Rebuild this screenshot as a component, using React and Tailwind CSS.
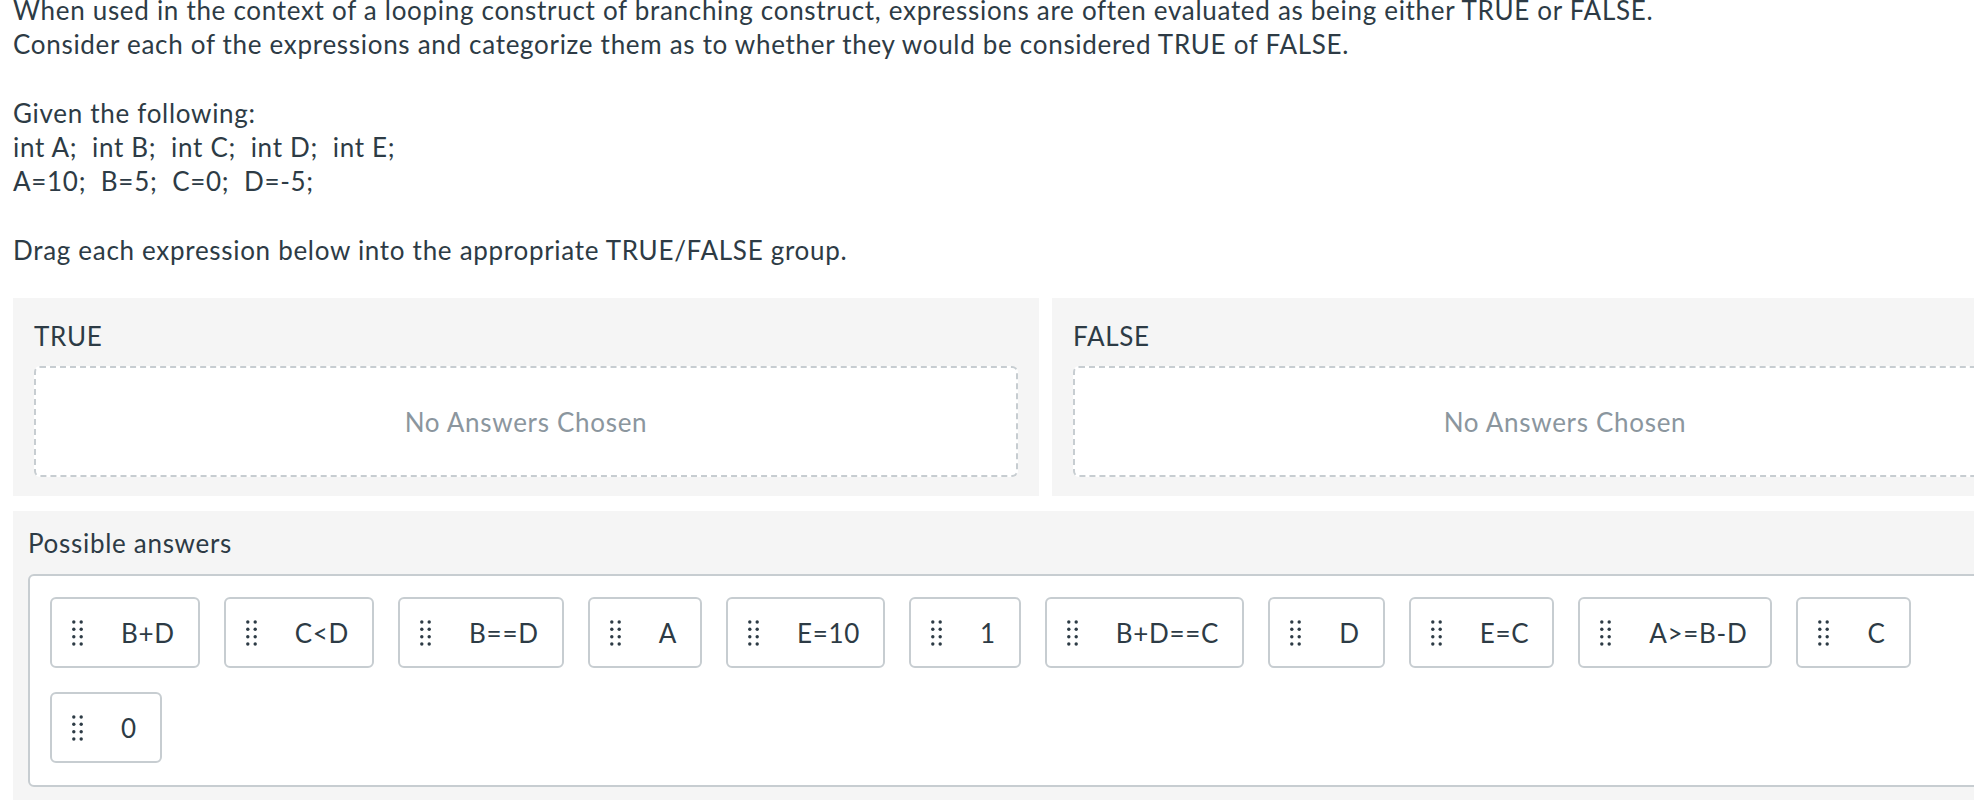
const answers = ["B+D", "C<D", "B==D", "A", "E=10", "1", "B+D==C", "D", "E=C", "A>=B-D", "C", "0"];

function DragHandle() {
  return (
    <svg width="11" height="26" viewBox="0 0 11 26" fill="#2d3b45" className="shrink-0">
      <circle cx="1.8" cy="2" r="1.7" />
      <circle cx="9.2" cy="2" r="1.7" />
      <circle cx="1.8" cy="9.3" r="1.7" />
      <circle cx="9.2" cy="9.3" r="1.7" />
      <circle cx="1.8" cy="16.7" r="1.7" />
      <circle cx="9.2" cy="16.7" r="1.7" />
      <circle cx="1.8" cy="24" r="1.7" />
      <circle cx="9.2" cy="24" r="1.7" />
    </svg>
  );
}

function Chip({ label }) {
  return (
    <div className="h-[71px] flex items-center border-2 border-[#c7cdd1] rounded-md bg-white pl-[20px] pr-[23px]">
      <DragHandle />
      <span className="ml-[38px] leading-[34px]">{label}</span>
    </div>
  );
}

function Group({ title }) {
  return (
    <div className="w-[1026px] shrink-0 bg-[#f5f5f5] pt-[21px] px-[21px] pb-[19px]">
      <div className="leading-[34px]">{title}</div>
      <div className="mt-[13px] h-[111px] flex items-center justify-center rounded-md border-2 border-dashed border-[#c7cdd1] bg-white text-[#8b969e]">
        No Answers Chosen
      </div>
    </div>
  );
}

export default function App() {
  return (
    <div className="w-[1974px] h-[800px] overflow-hidden bg-white text-[#2d3b45] text-[26px] tracking-[0.7px] leading-[34.3px] font-['Lato','Noto_Sans',sans-serif]">
      <div className="w-[2100px] -mt-[7px]">
        {/* Question text */}
        <div className="pl-[13px] whitespace-pre">
          <div>When used in the context of a looping construct of branching construct, expressions are often evaluated as being either TRUE or FALSE.</div>
          <div>Consider each of the expressions and categorize them as to whether they would be considered TRUE of FALSE.</div>
          <div>&nbsp;</div>
          <div>Given the following:</div>
          <div>{"int A;  int B;  int C;  int D;  int E;"}</div>
          <div>A=10;  B=5;  C=0;  D=-5;</div>
          <div>&nbsp;</div>
          <div>Drag each expression below into the appropriate TRUE/FALSE group.</div>
        </div>

        {/* Groups */}
        <div className="flex gap-[13px] mt-[31px] pl-[13px]">
          <Group title="TRUE" />
          <Group title="FALSE" />
        </div>

        {/* Possible answers */}
        <div className="ml-[13px] mt-[15px] w-[2000px] bg-[#f5f5f5] p-[15px]">
          <div className="leading-[34px]">Possible answers</div>
          <div className="mt-[14px] border-2 border-[#c7cdd1] rounded-md bg-white pt-[21px] pb-[22px] px-[20px] flex flex-wrap gap-[24px]">
            {answers.map((a) => (
              <Chip key={a} label={a} />
            ))}
          </div>
        </div>
      </div>
    </div>
  );
}
